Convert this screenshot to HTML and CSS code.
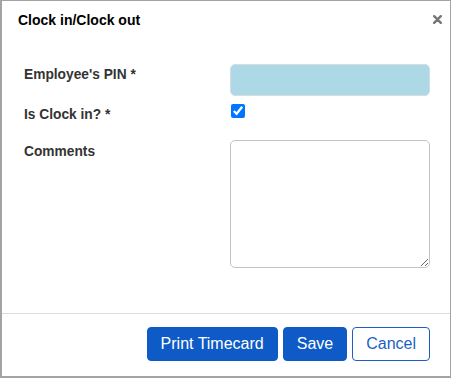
FILE: index.html
```html
<!DOCTYPE html>
<html>
<head>
<meta charset="utf-8">
<link rel="stylesheet" href="styles.css">
</head>
<body>
<div class="dialog">
  <div class="header">
    <span class="title">Clock in/Clock out</span>
    <span class="close" aria-label="Close">
      <svg width="9" height="9" viewBox="0 0 9 9"><path d="M1.2 1.2 L7.8 7.8 M7.8 1.2 L1.2 7.8" stroke="#777" stroke-width="2.4" stroke-linecap="round"/></svg>
    </span>
  </div>
  <div class="form">
    <div class="row row-pin">
      <label class="label">Employee's PIN *</label>
      <input class="pin" type="text">
    </div>
    <div class="row row-check">
      <label class="label">Is Clock in? *</label>
      <input class="check" type="checkbox" checked>
    </div>
    <div class="row">
      <label class="label">Comments</label>
      <textarea class="comments"></textarea>
    </div>
  </div>
  <div class="footer">
    <button class="btn btn-primary">Print Timecard</button>
    <button class="btn btn-primary">Save</button>
    <button class="btn btn-outline">Cancel</button>
  </div>
</div>
</body>
</html>
```

FILE: styles.css
```css
html, body {
  margin: 0;
  padding: 0;
  background: #fff;
}

body {
  font-family: "Liberation Sans", Arial, sans-serif;
}

.dialog {
  width: 451px;
  height: 378px;
  box-sizing: border-box;
  border: 1px solid #a3a3a3;
  border-left-width: 2px;
  border-bottom-width: 2px;
  display: flex;
  flex-direction: column;
  background: #fff;
}

.header {
  display: flex;
  justify-content: space-between;
  align-items: flex-start;
  padding: 11px 8px 21px 16px;
}

.title {
  font-size: 14px;
  line-height: 16px;
  font-weight: bold;
  color: #000;
}

.close {
  display: block;
  margin-top: 3px;
  width: 9px;
  height: 9px;
}

.close svg {
  display: block;
}

.form {
  flex: 1;
  padding: 15px 20px 0 22px;
}

.row {
  display: flex;
  align-items: flex-start;
}

.row-pin {
  height: 32px;
  margin-bottom: 8px;
}

.row-check {
  height: 18px;
  margin-bottom: 18px;
}

.label {
  width: 206px;
  flex: none;
  padding-top: 3px;
  font-size: 13.75px;
  line-height: 15px;
  font-weight: bold;
  color: #333;
}

.row:last-child .label {
  padding-top: 4px;
}

.pin {
  width: 200px;
  height: 32px;
  box-sizing: border-box;
  margin: 0;
  border: 1px solid #d6dde0;
  border-radius: 5px;
  background: #add8e6;
  padding: 0 8px;
  outline: none;
}

.check {
  width: 14px;
  height: 14px;
  margin: 0 0 0 1px;
}

.comments {
  width: 200px;
  height: 128px;
  box-sizing: border-box;
  margin: 0;
  border: 1px solid #c4c4c4;
  border-radius: 5px;
  background: #fff;
  resize: vertical;
  font-family: "Liberation Sans", Arial, sans-serif;
}

.footer {
  display: flex;
  justify-content: flex-end;
  gap: 5px;
  border-top: 1px solid #dcdcdc;
  padding: 13px 20px 15px 0;
}

.btn {
  height: 34px;
  box-sizing: border-box;
  padding: 0 13px;
  border-radius: 4px;
  font-family: "Liberation Sans", Arial, sans-serif;
  font-size: 16px;
  line-height: 20px;
  cursor: pointer;
}

.btn-primary {
  background: #0e5ac6;
  border: 1px solid #0e5ac6;
  color: #fff;
}

.btn-outline {
  background: #fff;
  border: 1px solid #1b5fc6;
  color: #1b5fc6;
}
```
